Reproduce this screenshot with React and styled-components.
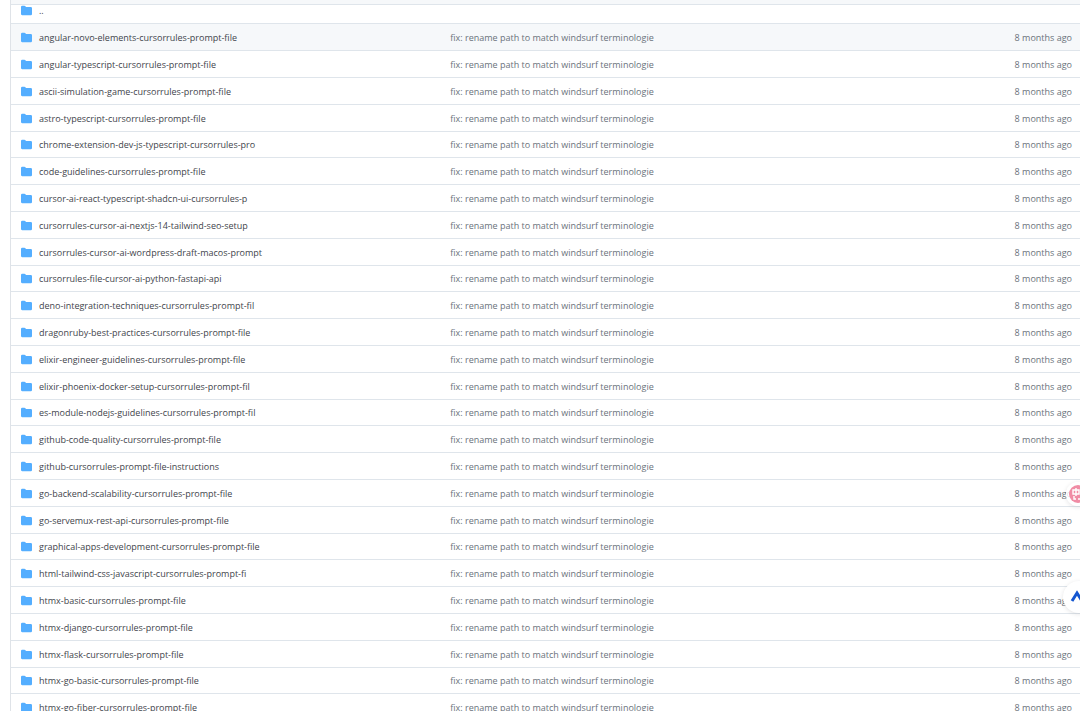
import React from 'react'
import styled, { createGlobalStyle } from 'styled-components'

const GlobalStyle = createGlobalStyle`
  * {
    box-sizing: border-box;
  }

  body {
    margin: 0;
    background: #fff;
    overflow: hidden;
    font-family: "Open Sans", "Noto Sans", sans-serif;
    font-size: 9px;
    line-height: 11px;
    color: #6a727b;
  }
`

const Listing = styled.main`
  margin-left: 10px;
  border-left: 1px solid #dfe3e8;
  height: 100vh;
  overflow: hidden;
`

const Table = styled.table`
  width: 100%;
  table-layout: fixed;
  border-collapse: separate;
  border-spacing: 0;
`

const HeadCell = styled.th`
  height: 5px;
  padding: 0;
  width: ${props => props.$width};
  background: #f6f8fa;
  border-bottom: 1px solid #dfe5eb;
`

const Cell = styled.td`
  padding: 0;
  border-bottom: 1px solid #dfe5eb;
  text-align: ${props => props.$align || 'left'};
  white-space: nowrap;
`

const MessageCell = styled(Cell)`
  padding-left: 1px;
`

const DateCell = styled(Cell)`
  padding-right: 8px;
`

const ParentCell = styled(Cell)`
  height: 19px;
  vertical-align: top;
`

const Row = styled.tr`
  height: 27px;
  background: ${props => (props.$active ? '#f6f8fa' : '#fff')};

  &:nth-child(5n) {
    height: 26px;
  }
`

const NameBox = styled.div`
  display: flex;
  align-items: center;
  gap: 7px;
  padding-left: 10px;
`

const NameLink = styled.a`
  color: #3f454c;
  text-decoration: none;
`

const MessageLink = styled.a`
  color: #6a727b;
  text-decoration: none;
`

const FolderIcon = styled.svg`
  flex: none;
  width: 11px;
  height: 11px;
  fill: #54aeff;
`

const FloatButton = styled.button`
  position: fixed;
  right: ${props => props.$right};
  top: ${props => props.$top};
  width: ${props => props.$size};
  height: ${props => props.$size};
  padding: 0;
  border: 0;
  border-radius: 50%;
  background: ${props => props.$background || '#fff'};
  box-shadow: 0 1px 4px rgba(31, 35, 40, 0.12);

  svg {
    display: block;
    width: 100%;
    height: 100%;
  }
`

const folders = [
  'angular-novo-elements-cursorrules-prompt-file',
  'angular-typescript-cursorrules-prompt-file',
  'ascii-simulation-game-cursorrules-prompt-file',
  'astro-typescript-cursorrules-prompt-file',
  'chrome-extension-dev-js-typescript-cursorrules-pro',
  'code-guidelines-cursorrules-prompt-file',
  'cursor-ai-react-typescript-shadcn-ui-cursorrules-p',
  'cursorrules-cursor-ai-nextjs-14-tailwind-seo-setup',
  'cursorrules-cursor-ai-wordpress-draft-macos-prompt',
  'cursorrules-file-cursor-ai-python-fastapi-api',
  'deno-integration-techniques-cursorrules-prompt-fil',
  'dragonruby-best-practices-cursorrules-prompt-file',
  'elixir-engineer-guidelines-cursorrules-prompt-file',
  'elixir-phoenix-docker-setup-cursorrules-prompt-fil',
  'es-module-nodejs-guidelines-cursorrules-prompt-fil',
  'github-code-quality-cursorrules-prompt-file',
  'github-cursorrules-prompt-file-instructions',
  'go-backend-scalability-cursorrules-prompt-file',
  'go-servemux-rest-api-cursorrules-prompt-file',
  'graphical-apps-development-cursorrules-prompt-file',
  'html-tailwind-css-javascript-cursorrules-prompt-fi',
  'htmx-basic-cursorrules-prompt-file',
  'htmx-django-cursorrules-prompt-file',
  'htmx-flask-cursorrules-prompt-file',
  'htmx-go-basic-cursorrules-prompt-file',
  'htmx-go-fiber-cursorrules-prompt-file'
]

const Name = props => (
  <NameBox>
    <FolderIcon viewBox='0 0 16 16' aria-hidden='true'>
      <path d='M1.75 1A1.75 1.75 0 0 0 0 2.75v10.5C0 14.216.784 15 1.75 15h12.5A1.75 1.75 0 0 0 16 13.25v-8.5A1.75 1.75 0 0 0 14.25 3H7.5a.25.25 0 0 1-.2-.1l-.9-1.2C6.07 1.26 5.55 1 5 1H1.75Z' />
    </FolderIcon>
    <NameLink href='#'>{props.children}</NameLink>
  </NameBox>
)

const FolderRow = props => (
  <Row $active={props.active}>
    <Cell><Name>{props.name}</Name></Cell>
    <MessageCell><MessageLink href='#'>fix: rename path to match windsurf terminologie</MessageLink></MessageCell>
    <DateCell $align='right'>8 months ago</DateCell>
  </Row>
)

export default () => (
  <>
    <GlobalStyle />
    <Listing>
      <Table>
        <thead>
          <tr>
            <HeadCell $width='41%' aria-label='Name' />
            <HeadCell aria-label='Last commit message' />
            <HeadCell $width='12%' aria-label='Last commit date' />
          </tr>
          <tr>
            <ParentCell colSpan='3'><Name>..</Name></ParentCell>
          </tr>
        </thead>
        <tbody>
          {folders.map((name, i) => <FolderRow key={name} name={name} active={i === 0} />)}
        </tbody>
      </Table>
    </Listing>
    <FloatButton $right='-10px' $top='482px' $size='24px' $background='rgba(255, 255, 255, 0.8)' aria-label='Translate'>
      <svg viewBox='0 0 24 24'>
        <circle cx='12' cy='12' r='9' fill='#f08ca5' />
        <path d='M7 8h6v4H7zM10 6v8M8 14v3h2M12 17h3' fill='none' stroke='#fff' strokeWidth='1.4' />
      </svg>
    </FloatButton>
    <FloatButton $right='-15px' $top='581px' $size='32px' aria-label='Back to top'>
      <svg viewBox='0 0 32 32'>
        <path d='M9 20l5-8 5 8' fill='none' stroke='#1456d0' strokeWidth='3' />
      </svg>
    </FloatButton>
  </>
)
